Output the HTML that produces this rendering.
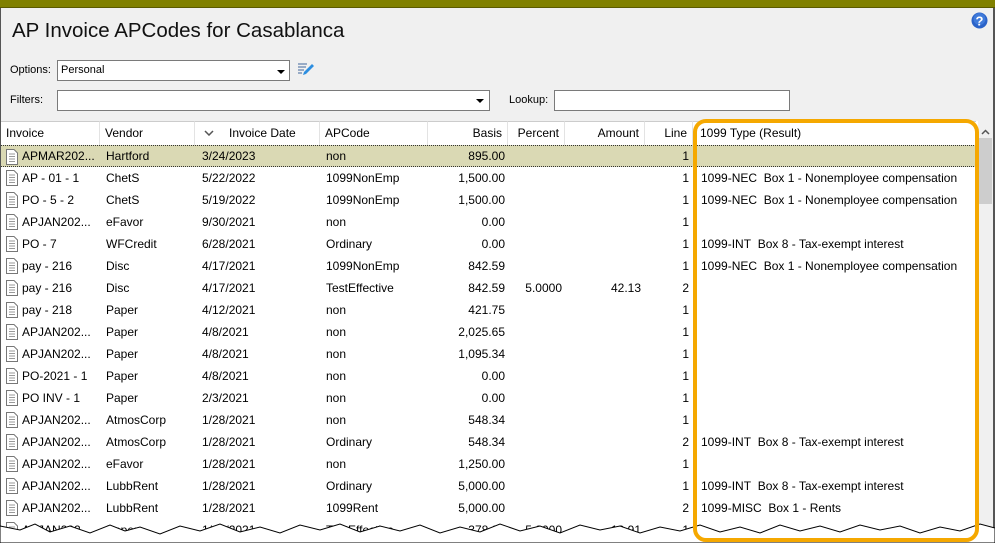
<!DOCTYPE html>
<html><head><meta charset="utf-8"><style>
*{margin:0;padding:0;box-sizing:border-box}
body{width:995px;height:543px;overflow:hidden;background:#fff;font-family:Tahoma,"Liberation Sans","DejaVu Sans",sans-serif;font-size:12px;color:#000;position:relative}
.win{position:absolute;left:0;top:0;width:995px;height:543px;background:#f0f0f0;border-left:1px solid #555;border-right:2px solid #555}
.top{position:absolute;left:0;top:0;width:995px;height:8px;background:#808000;border-bottom:1px solid #5a5a00}
.title{position:absolute;left:12px;top:19px;font-size:20.5px;color:#111}
.lbl{position:absolute;font-size:11px}
.box{position:absolute;background:#fff;border:1px solid #7a7a7a;height:21px}
.arr{position:absolute;width:0;height:0;border-left:4px solid transparent;border-right:4px solid transparent;border-top:4px solid #000}
.grid{position:absolute;left:1px;top:121px;width:977px;height:422px;background:#fff}
.hdr{position:absolute;top:0;height:24px;border-right:1px solid #e3e3e3;border-top:1px solid #ccc;line-height:23px;padding:0 5px;white-space:nowrap}
.row{position:absolute;left:0;width:975px;height:22px}
.c{position:absolute;top:0;height:22px;line-height:22px;white-space:nowrap;overflow:hidden}
.r{text-align:right}
.sel{background:#dad9b4;border-top:1px dotted #333;border-bottom:1px dotted #333}
.ic{position:absolute;left:5px;top:3px}
.sb{position:absolute;left:978px;top:121px;width:15px;height:422px;background:#f0f0f0}
</style></head><body>
<div class="win"></div>
<div class="top"></div>
<div class="title">AP Invoice APCodes for Casablanca</div>
<svg style="position:absolute;left:971px;top:12px" width="17" height="17"><circle cx="8.5" cy="8.5" r="8" fill="#2a62c8"/><circle cx="8.5" cy="7" r="6" fill="#4f8be6" opacity=".6"/><text x="8.5" y="13.5" text-anchor="middle" font-size="13" font-weight="bold" fill="#fff" font-family="Liberation Sans">?</text></svg>
<div class="lbl" style="left:10px;top:64px">Options:</div>
<div class="box" style="left:57px;top:60px;width:233px;font-size:11px;padding:3px 3px">Personal</div>
<div class="arr" style="left:277px;top:70px"></div>
<svg style="position:absolute;left:297px;top:61px" width="18" height="16"><g stroke="#6a86b0" stroke-width="1.3"><line x1="1" y1="3" x2="10" y2="3"/><line x1="1" y1="6" x2="9" y2="6"/><line x1="1" y1="9" x2="7" y2="9"/><line x1="1" y1="12" x2="5" y2="12"/></g><path d="M6 14 L7 11 L15 3 L17 5 L9 13 Z" fill="#2d8ee0"/></svg>
<div class="lbl" style="left:10px;top:94px">Filters:</div>
<div class="box" style="left:57px;top:90px;width:433px"></div>
<div class="arr" style="left:476px;top:99px"></div>
<div class="lbl" style="left:509px;top:94px">Lookup:</div>
<div class="box" style="left:554px;top:90px;width:236px"></div>
<div class="grid">
<div class="hdr" style="left:0;width:99px">Invoice</div>
<div class="hdr" style="left:99px;width:95px">Vendor</div>
<div class="hdr" style="left:194px;width:125px;padding-left:34px">Invoice Date<svg style="position:absolute;left:9px;top:8px" width="10" height="6"><path d="M1 1 L5 5 L9 1" fill="none" stroke="#555" stroke-width="1.5"/></svg></div>
<div class="hdr" style="left:319px;width:108px">APCode</div>
<div class="hdr r" style="left:427px;width:80px">Basis</div>
<div class="hdr r" style="left:507px;width:57px">Percent</div>
<div class="hdr r" style="left:564px;width:80px">Amount</div>
<div class="hdr r" style="left:644px;width:48px">Line</div>
<div class="hdr" style="left:692px;width:283px;border-right:none;padding-left:7px">1099 Type (Result)</div>
<div id="rows"></div>
</div>
<div class="sb"><svg style="position:absolute;left:3px;top:8px" width="9" height="6"><path d="M1 5 L4.5 1.5 L8 5" fill="none" stroke="#555" stroke-width="1.5"/></svg><div style="position:absolute;left:1px;top:17px;width:13px;height:66px;background:#cdcdcd"></div></div>
<svg style="position:absolute;left:0;top:0" width="995" height="543">
<path d="M0 526 L20 530 L35 524 L50 532 L70 526 L90 533 L110 525 L125 531 L140 527 L160 534 L180 526 L200 531 L220 524 L240 532 L260 527 L280 533 L300 525 L320 530 L340 524 L360 532 L380 526 L400 531 L420 525 L440 533 L460 527 L480 532 L500 524 L520 531 L540 526 L560 533 L580 525 L600 530 L620 526 L640 533 L660 527 L680 531 L700 525 L720 532 L740 527 L760 533 L780 525 L800 531 L820 526 L840 532 L860 525 L880 530 L900 526 L920 533 L940 527 L960 531 L980 524 L995 528 L995 543 L0 543 Z" fill="#fff" stroke="#000" stroke-width="1"/>
<rect x="695" y="121" width="282" height="419" rx="11" fill="none" stroke="#f5a800" stroke-width="4"/>
</svg>
<script>
var d=[["APMAR202...","Hartford","3/24/2023","non","895.00","","","1",""],
["AP - 01 - 1","ChetS","5/22/2022","1099NonEmp","1,500.00","","","1","1099-NEC&nbsp; Box 1 - Nonemployee compensation"],
["PO - 5 - 2","ChetS","5/19/2022","1099NonEmp","1,500.00","","","1","1099-NEC&nbsp; Box 1 - Nonemployee compensation"],
["APJAN202...","eFavor","9/30/2021","non","0.00","","","1",""],
["PO - 7","WFCredit","6/28/2021","Ordinary","0.00","","","1","1099-INT&nbsp; Box 8 - Tax-exempt interest"],
["pay - 216","Disc","4/17/2021","1099NonEmp","842.59","","","1","1099-NEC&nbsp; Box 1 - Nonemployee compensation"],
["pay - 216","Disc","4/17/2021","TestEffective","842.59","5.0000","42.13","2",""],
["pay - 218","Paper","4/12/2021","non","421.75","","","1",""],
["APJAN202...","Paper","4/8/2021","non","2,025.65","","","1",""],
["APJAN202...","Paper","4/8/2021","non","1,095.34","","","1",""],
["PO-2021 - 1","Paper","4/8/2021","non","0.00","","","1",""],
["PO INV - 1","Paper","2/3/2021","non","0.00","","","1",""],
["APJAN202...","AtmosCorp","1/28/2021","non","548.34","","","1",""],
["APJAN202...","AtmosCorp","1/28/2021","Ordinary","548.34","","","2","1099-INT&nbsp; Box 8 - Tax-exempt interest"],
["APJAN202...","eFavor","1/28/2021","non","1,250.00","","","1",""],
["APJAN202...","LubbRent","1/28/2021","Ordinary","5,000.00","","","1","1099-INT&nbsp; Box 8 - Tax-exempt interest"],
["APJAN202...","LubbRent","1/28/2021","1099Rent","5,000.00","","","2","1099-MISC&nbsp; Box 1 - Rents"],
["APJAN202...","Paper","1/15/2021","TestEffective","378.21","5.0000","18.91","1",""]];
var cols=[[21,80,0],[105,90,0],[201,115,0],[325,100,0],[427,77,1],[507,54,1],[564,76,1],[644,44,1],[700,275,0]];
var ic='<svg class="ic" width="12" height="16"><path d="M0.5 0.5 H8 L11.5 4 V15.5 H0.5 Z" fill="#fff" stroke="#777"/><g stroke="#999"><line x1="3" y1="5" x2="9" y2="5"/><line x1="3" y1="7.5" x2="9" y2="7.5"/><line x1="3" y1="10" x2="9" y2="10"/><line x1="3" y1="12.5" x2="9" y2="12.5"/></g></svg>';
var h="";
d.forEach(function(r,i){h+='<div class="row'+(i==0?' sel':'')+'" style="top:'+(24+i*22)+'px">'+ic;
cols.forEach(function(c,j){h+='<div class="c'+(c[2]?' r':'')+'" style="left:'+c[0]+'px;width:'+c[1]+'px;'+(i==0?'top:-1px':'')+'">'+r[j]+'</div>';});h+='</div>';});
document.getElementById("rows").innerHTML=h;
</script>
</body></html>
